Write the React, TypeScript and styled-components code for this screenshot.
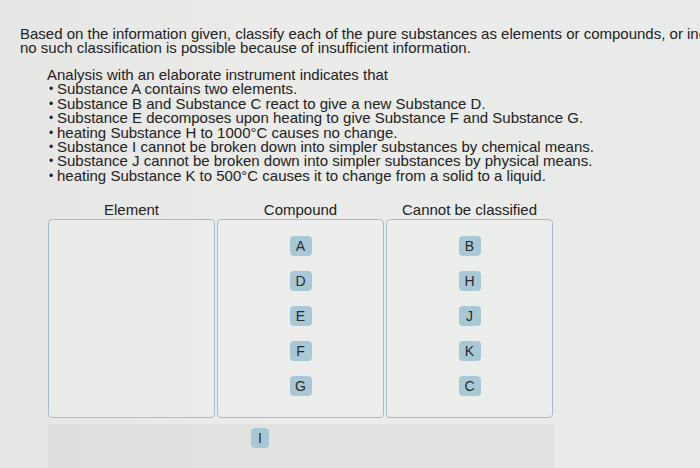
import React from "react";
import styled, { createGlobalStyle } from "styled-components";

const Global = createGlobalStyle`
  html, body {
    margin: 0;
    padding: 0;
    background: #e9e9e7;
    overflow: hidden;
  }
  body {
    font-family: "Liberation Sans", Arial, sans-serif;
    color: #222;
  }
`;

const Page = styled.div`
  width: 700px;
  height: 468px;
  padding: 27px 0 0 20px;
  box-sizing: border-box;
  overflow: hidden;
  background: linear-gradient(90deg, #e6e6e4 0%, #ebebea 40%, #e8ebe9 100%);
`;

const Intro = styled.p`
  margin: 0;
  font-size: 15px;
  line-height: 14px;
  white-space: nowrap;
`;

const Facts = styled.div`
  margin: 13px 0 0 27px;
  font-size: 15px;
  line-height: 14.4px;
`;

const FactList = styled.ul`
  list-style: none;
  margin: 0;
  padding: 0;
`;

const Fact = styled.li`
  display: flex;
  &::before {
    content: "•";
    font-size: 12px;
    width: 8px;
    margin-left: 2px;
  }
`;

const Board = styled.div`
  margin: 19px 0 0 28px;
  width: 506px;
`;

const Columns = styled.div`
  display: grid;
  grid-template-columns: repeat(3, 167px);
  column-gap: 2px;
`;

const Column = styled.div`
  display: flex;
  flex-direction: column;
  align-items: stretch;
`;

const Heading = styled.div`
  text-align: center;
  font-size: 15px;
  line-height: 16px;
  height: 17px;
`;

const Bin = styled.div`
  height: 199px;
  box-sizing: border-box;
  border: 1px solid #a3bccf;
  border-radius: 4px;
  background: rgba(255, 255, 255, 0.12);
  padding-top: 16px;
  display: flex;
  flex-direction: column;
  align-items: center;
  gap: 15px;
`;

const Chip = styled.div<{ $w?: number }>`
  width: ${(p) => p.$w ?? 22}px;
  height: 20px;
  box-sizing: border-box;
  border-radius: 4px;
  background: #a9c8d6;
  color: #2a2a2a;
  font-size: 14px;
  line-height: 20px;
  text-align: center;
`;

const Pool = styled.div`
  margin-top: 6px;
  height: 60px;
  background: rgba(0, 0, 0, 0.035);
  padding: 4px 0 0 203px;
  box-sizing: border-box;
`;

const facts = [
  "Substance A contains two elements.",
  "Substance B and Substance C react to give a new Substance D.",
  "Substance E decomposes upon heating to give Substance F and Substance G.",
  "heating Substance H to 1000°C causes no change.",
  "Substance I cannot be broken down into simpler substances by chemical means.",
  "Substance J cannot be broken down into simpler substances by physical means.",
  "heating Substance K to 500°C causes it to change from a solid to a liquid.",
];

const bins = [
  { title: "Element", items: [] as string[] },
  { title: "Compound", items: ["A", "D", "E", "F", "G"] },
  { title: "Cannot be classified", items: ["B", "H", "J", "K", "C"] },
];

export default function App() {
  return (
    <Page>
      <Global />
      <Intro>
        Based on the information given, classify each of the pure substances as elements or compounds, or indicate if
        <br />
        no such classification is possible because of insufficient information.
      </Intro>
      <Facts>
        <div>Analysis with an elaborate instrument indicates that</div>
        <FactList>
          {facts.map((f) => (
            <Fact key={f}>{f}</Fact>
          ))}
        </FactList>
      </Facts>
      <Board>
        <Columns>
          {bins.map((b) => (
            <Column key={b.title}>
              <Heading>{b.title}</Heading>
              <Bin>
                {b.items.map((i) => (
                  <Chip key={i}>{i}</Chip>
                ))}
              </Bin>
            </Column>
          ))}
        </Columns>
        <Pool>
          <Chip $w={18}>I</Chip>
        </Pool>
      </Board>
    </Page>
  );
}
